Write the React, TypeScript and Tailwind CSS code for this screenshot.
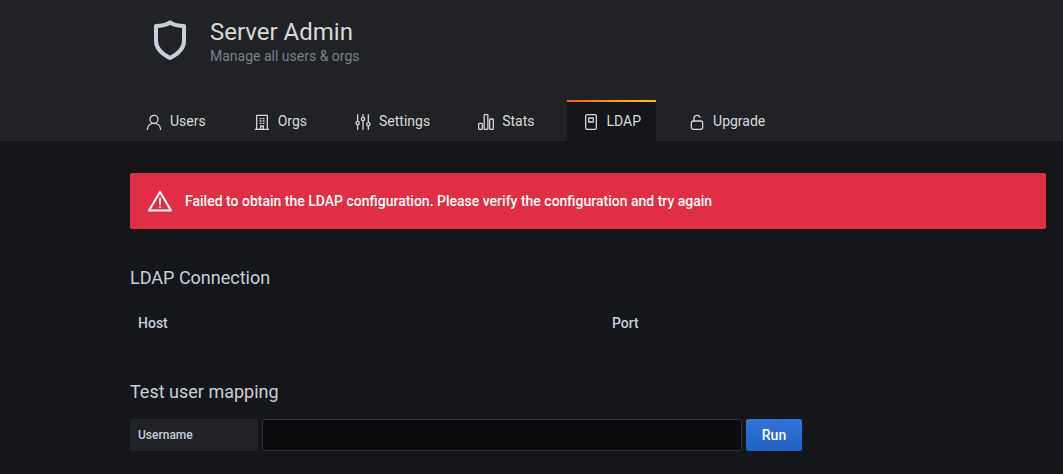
import React from "react";

const I = ({ children }: { children: React.ReactNode }) => (
  <svg viewBox="0 0 24 24" fill="none" stroke="currentColor" strokeWidth="1.9" strokeLinecap="round" strokeLinejoin="round" className="w-[16px] h-[16px] mr-[8px] shrink-0 text-[#d8d9da] mt-[1px]">
    {children}
  </svg>
);

const tabs: { label: string; active?: boolean; icon: React.ReactNode }[] = [
  { label: "Users", icon: <><circle cx="12" cy="8" r="6" /><path d="M2 23c.6-5.500 4.500-9 10-9s9.400 3.500 10 9" /></> },
  { label: "Orgs", icon: <><path d="M4 23V2h16v21M2 23h20M10 23v-5h4v5" /><path d="M9 7h1.500M13.500 7H15M9 10.500h1.500M13.500 10.500H15M9 14h1.500M13.500 14H15" /></> },
  { label: "Settings", icon: <><path d="M4 1v9M4 17v6M12 1v3M12 11v12M20 1v11M20 19v4" /><circle cx="4" cy="13.500" r="2.500" /><circle cx="12" cy="7.500" r="2.500" /><circle cx="20" cy="15.500" r="2.500" /></> },
  { label: "Stats", icon: <><rect x="1" y="14" width="5.500" height="9" rx="1" /><rect x="9.300" y="1" width="5.500" height="22" rx="1" /><rect x="17.500" y="7.500" width="5.500" height="15.500" rx="1" /></> },
  { label: "LDAP", active: true, icon: <><rect x="4" y="1" width="16" height="22" rx="2" /><rect x="8.500" y="6" width="7" height="6" /></> },
  { label: "Upgrade", icon: <><rect x="3.500" y="10.500" width="17" height="12.500" rx="3" /><path d="M7.500 10.500V6.500a4.700 4.700 0 0 1 9-1.500" /></> },
];

export default function App() {
  return (
    <div className="min-h-[474px] bg-[#141619] font-['Roboto',sans-serif] text-[#c7d0d9] overflow-hidden">
      <header className="bg-[#202226] h-[141px] pl-[130px] flex flex-col">
        <div className="flex h-[100px] pl-[22px] pt-[17px]">
          <svg viewBox="0 0 36 46" className="w-[36px] h-[46px] text-[#c7d0d9]" fill="none" stroke="currentColor" strokeWidth="4" strokeLinejoin="round">
            <path d="M18 5.500 C22 8 26 9 32 9 V24 C32 32 26 37 18 41 C10 37 4 32 4 24 V9 C10 9 14 8 18 5.500 Z" />
          </svg>
          <div className="ml-[22px] mt-[-1px]">
            <div className="text-[24px] leading-[32px] text-[#d8d9da]">Server Admin</div>
            <div className="text-[14px] leading-[18px] text-[#7b8087] mt-[-1px]">Manage all users &amp; orgs</div>
          </div>
        </div>
        <nav className="flex gap-[16px] h-[41px]">
          {tabs.map((t) => (
            <div
              key={t.label}
              className={
                t.active
                  ? "relative flex items-center h-[41px] pl-[16px] pr-[15px] mr-[1px] pt-[1px] bg-[#141619] text-[#d8d9da] text-[14px] rounded-t-[2px]"
                  : "flex items-center h-[41px] px-[16px] pt-[1px] text-[#d8d9da] text-[14px]"
              }
            >
              {t.active ? <div className="absolute left-0 right-0 top-0 h-[2px] bg-gradient-to-r from-[#f05a28] to-[#fbca0a]" /> : null}
              <I>{t.icon}</I>
              <span>{t.label}</span>
            </div>
          ))}
        </nav>
      </header>
      <main className="pl-[130px] pr-[17px] pt-[32px]">
        <div className="h-[56px] bg-[#e02f44] rounded-[2px] flex items-center pl-[18px] text-white text-[14px] font-medium">
          <svg viewBox="0 0 24 22" className="w-[24px] h-[22px] mr-[13px]" fill="none" stroke="currentColor" strokeWidth="2" strokeLinejoin="round" strokeLinecap="round">
            <path d="M12 2 L23 20.500 H1 Z" />
            <path d="M12 8.500 V14" />
            <path d="M12 17.200 V17.300" />
          </svg>
          <span>Failed to obtain the LDAP configuration. Please verify the configuration and try again</span>
        </div>
        <h3 className="text-[18px] leading-[22px] text-[#c7d0d9] mt-[38px]">LDAP Connection</h3>
        <div className="flex mt-[25px] text-[14px] leading-[18px] font-medium text-[#c7d0d9]">
          <div className="w-[474px] pl-[8px]">Host</div>
          <div className="pl-[8px]">Port</div>
        </div>
        <h3 className="text-[18px] leading-[22px] text-[#c7d0d9] mt-[49px]">Test user mapping</h3>
        <div className="flex mt-[16px] h-[32px]">
          <div className="w-[128px] bg-[#202226] rounded-[2px] flex items-center pl-[8px] text-[12px] font-medium text-[#c7d0d9]">Username</div>
          <input className="w-[480px] ml-[4px] bg-[#0b0c0e] border border-[#2c3235] rounded-[2px] outline-none" />
          <button className="w-[56px] ml-[4px] rounded-[2px] bg-gradient-to-b from-[#3274d9] to-[#1f60c4] text-white text-[14px] font-medium">Run</button>
        </div>
      </main>
    </div>
  );
}
